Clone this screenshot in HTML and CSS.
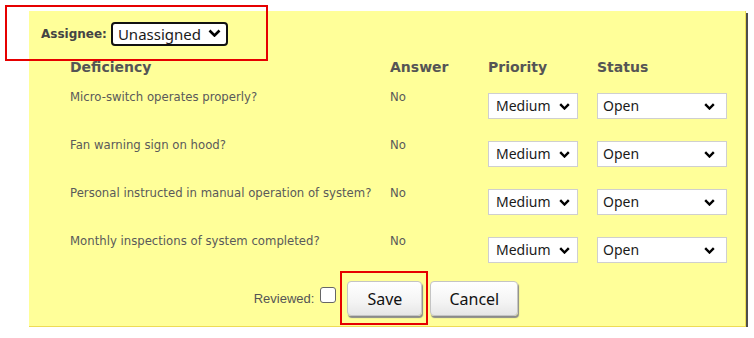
FILE: index.html
```html
<!DOCTYPE html>
<html lang="en">

<head>
    <meta charset="UTF-8">
    <meta name="viewport" content="width=device-width, initial-scale=1.0">
    <title>Deficiency Review</title>
    <link rel="stylesheet" href="styles.css">
</head>

<body>
    <div class="panel">
        <div class="assignee">
            <label for="assignee">Assignee:</label>
            <span class="pick pick-assignee">
                <select id="assignee">
                    <option>Unassigned</option>
                </select>
                <svg class="chev" width="13" height="8" viewBox="0 0 13 8"><path d="M1.5 1.5 L6.5 6.5 L11.5 1.5" fill="none" stroke="#000" stroke-width="2.6"/></svg>
            </span>
        </div>

        <div class="deficiencies">
            <div class="row head">
                <div>Deficiency</div>
                <div>Answer</div>
                <div>Priority</div>
                <div>Status</div>
            </div>

            <div class="row">
                <div class="question">Micro-switch operates properly?</div>
                <div class="answer">No</div>
                <div><span class="pick pick-priority"><select><option>Medium</option></select><svg class="chev" width="11" height="7" viewBox="0 0 11 7"><path d="M1.2 1.2 L5.5 5.5 L9.8 1.2" fill="none" stroke="#000" stroke-width="2.4"/></svg></span></div>
                <div><span class="pick pick-status"><select><option>Open</option></select><svg class="chev" width="11" height="7" viewBox="0 0 11 7"><path d="M1.2 1.2 L5.5 5.5 L9.8 1.2" fill="none" stroke="#000" stroke-width="2.4"/></svg></span></div>
            </div>

            <div class="row">
                <div class="question">Fan warning sign on hood?</div>
                <div class="answer">No</div>
                <div><span class="pick pick-priority"><select><option>Medium</option></select><svg class="chev" width="11" height="7" viewBox="0 0 11 7"><path d="M1.2 1.2 L5.5 5.5 L9.8 1.2" fill="none" stroke="#000" stroke-width="2.4"/></svg></span></div>
                <div><span class="pick pick-status"><select><option>Open</option></select><svg class="chev" width="11" height="7" viewBox="0 0 11 7"><path d="M1.2 1.2 L5.5 5.5 L9.8 1.2" fill="none" stroke="#000" stroke-width="2.4"/></svg></span></div>
            </div>

            <div class="row">
                <div class="question">Personal instructed in manual operation of system?</div>
                <div class="answer">No</div>
                <div><span class="pick pick-priority"><select><option>Medium</option></select><svg class="chev" width="11" height="7" viewBox="0 0 11 7"><path d="M1.2 1.2 L5.5 5.5 L9.8 1.2" fill="none" stroke="#000" stroke-width="2.4"/></svg></span></div>
                <div><span class="pick pick-status"><select><option>Open</option></select><svg class="chev" width="11" height="7" viewBox="0 0 11 7"><path d="M1.2 1.2 L5.5 5.5 L9.8 1.2" fill="none" stroke="#000" stroke-width="2.4"/></svg></span></div>
            </div>

            <div class="row">
                <div class="question">Monthly inspections of system completed?</div>
                <div class="answer">No</div>
                <div><span class="pick pick-priority"><select><option>Medium</option></select><svg class="chev" width="11" height="7" viewBox="0 0 11 7"><path d="M1.2 1.2 L5.5 5.5 L9.8 1.2" fill="none" stroke="#000" stroke-width="2.4"/></svg></span></div>
                <div><span class="pick pick-status"><select><option>Open</option></select><svg class="chev" width="11" height="7" viewBox="0 0 11 7"><path d="M1.2 1.2 L5.5 5.5 L9.8 1.2" fill="none" stroke="#000" stroke-width="2.4"/></svg></span></div>
            </div>
        </div>

        <div class="footer">
            <label for="reviewed" class="reviewed">Reviewed:</label>
            <input type="checkbox" id="reviewed" class="check">
            <button class="btn btn-save">Save</button>
            <button class="btn btn-cancel">Cancel</button>
        </div>
    </div>

    <!-- annotation boxes drawn over the screenshot -->
    <div class="mark mark-assignee"></div>
    <div class="mark mark-save"></div>
</body>

</html>
```

FILE: styles.css
```css
body {
    margin: 0;
    position: relative;
    background: #fff;
    font-family: "DejaVu Sans", Verdana, sans-serif;
}

.panel {
    margin: 11px 0 0 29px;
    width: 717px;
    height: 316px;
    padding-top: 11px;
    box-sizing: border-box;
    background: #ffff99;
    border-right: 1px solid #eedc55;
    border-bottom: 1px solid #eedc55;
    box-shadow: 2px 2px 0 #4d4d4d;
}

.assignee {
    display: flex;
    align-items: center;
    gap: 4px;
    margin-left: 12px;
    height: 24px;
}

.assignee label {
    font-size: 12px;
    font-weight: bold;
    color: #444;
}

.pick {
    position: relative;
    display: inline-block;
}

.pick select {
    appearance: none;
    -webkit-appearance: none;
    display: block;
    margin: 0;
    background: #fff;
    font-family: "Noto Sans", sans-serif;
    color: #1a1a1a;
    outline: none;
}

.pick .chev {
    position: absolute;
    pointer-events: none;
}

.pick-assignee select {
    width: 117px;
    height: 24px;
    padding: 0 0 0 5px;
    border: 2px solid #111;
    border-radius: 4px;
    font-size: 15px;
    line-height: 20px;
}

.pick-assignee .chev {
    right: 7px;
    top: 7px;
}

.pick-priority select,
.pick-status select {
    height: 26px;
    border: 1px solid #cfcfcf;
    border-radius: 0;
    font-size: 14px;
    line-height: 24px;
}

.pick-priority select {
    width: 90px;
    padding: 0 0 0 7px;
}

.pick-status select {
    width: 130px;
    padding: 0 0 0 5px;
}

.pick-priority .chev,
.pick-status .chev {
    top: 10px;
}

.pick-priority .chev {
    right: 8px;
}

.pick-status .chev {
    right: 12px;
}

.deficiencies {
    margin: 13px 0 0 41px;
}

.row {
    display: grid;
    grid-template-columns: 320px 98px 109px 140px;
    height: 48px;
    color: #5a5a5a;
}

.row.head {
    height: 17px;
    margin-bottom: 15px;
    font-size: 14px;
    font-weight: bold;
    line-height: 17px;
    color: #555;
}

.question,
.answer {
    font-size: 11.7px;
    line-height: 13px;
}

.row .pick {
    margin-top: 2px;
}

.footer {
    display: flex;
    align-items: center;
    justify-content: center;
    margin-top: -2px;
    padding-right: 2px;
}

.reviewed {
    font-family: "Liberation Sans", Arial, sans-serif;
    font-size: 13px;
    color: #555;
    margin-right: 6px;
}

.check {
    appearance: none;
    -webkit-appearance: none;
    width: 16px;
    height: 16px;
    margin: 0 11px 8px 0;
    border: 1px solid #666;
    border-radius: 3px;
    background: #fff;
}

.btn {
    height: 35px;
    padding: 0;
    font-family: "Noto Sans", sans-serif;
    font-size: 16px;
    color: #111;
    background: linear-gradient(#ffffff, #f4f4f4 60%, #e6e6e6);
    border: 1px solid #c4c4c4;
    border-radius: 4px;
    box-shadow: 1px 2px 1px #8a8a8a;
    cursor: pointer;
}

.btn-save {
    width: 75px;
    margin-right: 8px;
}

.btn-cancel {
    width: 88px;
}

.mark {
    position: absolute;
    border: 2px solid #e60000;
    box-sizing: border-box;
}

.mark-assignee {
    left: 5px;
    top: 5px;
    width: 263px;
    height: 56px;
}

.mark-save {
    left: 340px;
    top: 271px;
    width: 88px;
    height: 54px;
}
```
